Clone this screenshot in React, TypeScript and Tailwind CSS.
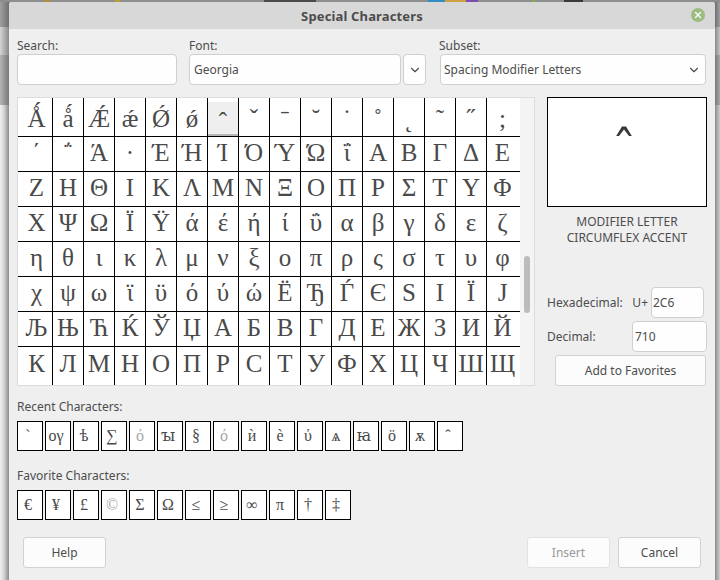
import React from "react";
import { ChevronDown, X } from "lucide-react";

const rows = [
  "ǺǻǼǽǾǿˆˇˉ˘˙˚˛˜˝;",
  "΄΅Ά·ΈΉΊΌΎΏΐΑΒΓΔΕ",
  "ΖΗΘΙΚΛΜΝΞΟΠΡΣΤΥΦ",
  "ΧΨΩΪΫάέήίΰαβγδεζ",
  "ηθικλμνξοπρςστυφ",
  "χψωϊϋόύώЁЂЃЄЅІЇЈ",
  "ЉЊЋЌЎЏАБВГДЕЖЗИЙ",
  "КЛМНОПРСТУФХЦЧШЩ",
];

const recent = ["`", "ογ", "ѣ", "∑", "ό", "ꙑ", "§", "ό", "ѝ", "è", "ὐ", "ѧ", "ꙗ", "ö", "ѫ", "ˆ"];
const favorites = ["€", "¥", "£", "©", "Σ", "Ω", "≤", "≥", "∞", "π", "†", "‡"];

const strip = [
  ["w-[44px]", "bg-[#8e8e8e]"],
  ["w-[6px]", "bg-[#b0923c]"],
  ["w-[65px]", "bg-[#8e8e8e]"],
  ["w-[5px]", "bg-[#b8a030]"],
  ["w-[144px]", "bg-[#8e8e8e]"],
  ["w-[52px]", "bg-[#4a4a4a]"],
  ["w-[112px]", "bg-[#8e8e8e]"],
  ["w-[17px]", "bg-[#2f8fc4]"],
  ["w-[21px]", "bg-[#d0a040]"],
  ["w-[12px]", "bg-[#7a4fb0]"],
  ["w-[54px]", "bg-[#8e8e8e]"],
  ["w-[3px]", "bg-[#7fae4e]"],
  ["w-[29px]", "bg-[#8e8e8e]"],
  ["w-[19px]", "bg-[#3a3a3a]"],
  ["w-[137px]", "bg-[#8e8e8e]"],
];

const input =
  "flex h-[31px] items-center rounded-[4px] border border-[#cfcfcf] bg-[#fdfefd] px-[4px]";
const button =
  "flex h-[31px] items-center justify-center rounded-[3px] border border-[#d2d2d2] bg-[#fbfcfb]";
const serif = "font-['Liberation_Serif','DejaVu_Serif',serif]";

const SmallCell = ({ char, faint }: { char: string; faint?: boolean }) => (
  <div
    className={`flex h-[30px] w-[26px] items-center justify-center border border-black bg-white pr-[4px] text-[16px] leading-none ${serif} ${
      faint ? "text-[#a5a5a5]" : "text-[#4a4a4a]"
    }`}
  >
    {char}
  </div>
);

export default function App() {
  return (
    <div className="flex h-[580px] w-[720px] flex-col overflow-hidden bg-[#8e8e8e] font-['Noto_Sans',sans-serif] text-[12px] leading-4 text-[#4d4d4d]">
      <div className="flex h-[2px] shrink-0">
        {strip.map(([w, c], i) => (
          <span key={i} className={`${w} ${c}`} />
        ))}
      </div>
      <div className="flex flex-1">
        <div className="flex w-[9px] flex-col">
          <div className="h-[25px] bg-[linear-gradient(90deg,#a0a0a0,#6f6f6f)]" />
          <div className="h-[28px] bg-[linear-gradient(90deg,#d5d5d5,#8a8a8a)]" />
          <div className="h-[50px] bg-[linear-gradient(90deg,#b5b5b5,#777777)]" />
          <div className="flex-1 bg-[linear-gradient(90deg,#f0f0f0_0%,#d8d8d8_40%,#8c8c8c_100%)]" />
        </div>

        <div className="flex w-[706px] flex-col rounded-t-[3px] bg-[#efefef]">
          <div className="relative flex h-[27px] items-center justify-center rounded-t-[3px] bg-[#d8d8d8]">
            <span className="text-[13px] font-bold tracking-[0.15px] text-[#4c4c4c]">Special Characters</span>
            <div className="absolute right-[10px] top-[6px] flex size-[14px] items-center justify-center rounded-full bg-[#9dbc7f]">
              <X className="size-[10px] text-white" strokeWidth={3} />
            </div>
          </div>

          <div className="flex flex-col pl-[8px] pt-[9px]">
            <div className="flex">
              <div className="w-[160px]">
                <div>Search:</div>
                <div className={input} />
              </div>
              <div className="ml-[12px]">
                <div>Font:</div>
                <div className="flex gap-[2px]">
                  <div className={`${input} w-[212px]`}>Georgia</div>
                  <div className={`${input} w-[23px] justify-center !px-0`}>
                    <ChevronDown className="size-[14px] text-[#4d4d4d]" />
                  </div>
                </div>
              </div>
              <div className="ml-[14px]">
                <div className="-ml-px">Subset:</div>
                <div className={`${input} w-[266px] justify-between !pl-[3px]`}>
                  Spacing Modifier Letters
                  <ChevronDown className="size-[14px] text-[#4d4d4d]" />
                </div>
              </div>
            </div>

            <div className="mt-[12px] flex">
              <div className="flex h-[289px] w-[518px] border border-[#dcdcdc] bg-[#f4f4f4]">
                <div
                  className={`grid w-[502px] grid-cols-[35px_repeat(14,31px)_33px] grid-rows-[39px_repeat(6,35px)_38px] bg-white text-[25px] leading-none text-[#4a4a4a] ${serif}`}
                >
                  {rows.map((row, r) =>
                    Array.from(row).map((ch, c) => {
                      const selected = r === 0 && c === 6;
                      return (
                        <div
                          key={`${r}-${c}`}
                          className={`flex border-black ${r < 7 ? "border-b" : ""} ${c < 15 ? "border-r" : ""} ${
                            selected ? "pt-[4px]" : ""
                          } ${c === 0 ? "pl-[3px]" : ""} ${c === 15 ? "pr-[2px]" : ""}`}
                        >
                          <div
                            className={`flex flex-1 items-center justify-center ${
                              selected
                                ? "border-b-2 border-[#b8b8b8] bg-[#efefef] pt-[6px]"
                                : r === 0
                                  ? "pt-[2px]"
                                  : r === 7
                                    ? "pb-[5px]"
                                    : "pb-[3px]"
                            }`}
                          >
                            {ch}
                          </div>
                        </div>
                      );
                    }),
                  )}
                </div>
                <div className="flex-1 pl-[4px] pt-[158px]">
                  <div className="h-[57px] w-[6px] rounded-full bg-[#bcbcbc]" />
                </div>
              </div>

              <div className="ml-[12px] flex w-[160px] flex-col">
                <div className="flex h-[110px] items-center justify-center border border-black bg-white pb-[4px] pr-[6px] font-['DejaVu_Serif',serif] text-[50px] leading-none text-[#3a3a3a]">
                  ˆ
                </div>
                <div className="mt-[7px] text-center">
                  MODIFIER LETTER
                  <br />
                  CIRCUMFLEX ACCENT
                </div>
                <div className="mt-[41px] flex items-center pr-[3px]">
                  <span>Hexadecimal:</span>
                  <span className="ml-auto mr-[3px]">U+</span>
                  <div className={`${input} w-[53px] !px-[1px]`}>2C6</div>
                </div>
                <div className="mt-[3px] flex items-center justify-between">
                  <span>Decimal:</span>
                  <div className={`${input} w-[75px] !px-[2px]`}>710</div>
                </div>
                <div className={`${button} ml-[8px] mr-px mt-[3px]`}>Add to Favorites</div>
              </div>
            </div>

            <div className="mt-[13px]">Recent Characters:</div>
            <div className="mt-[6px] flex gap-[2px]">
              {recent.map((ch, i) => (
                <SmallCell key={i} char={ch} faint={i === 4 || i === 7} />
              ))}
            </div>

            <div className="mt-[17px]">Favorite Characters:</div>
            <div className="mt-[6px] flex gap-[2px]">
              {favorites.map((ch, i) => (
                <SmallCell key={i} char={ch} faint={i === 3} />
              ))}
            </div>

            <div className="mt-[17px] flex pl-[6px] pr-[14px]">
              <div className={`${button} w-[83px]`}>Help</div>
              <div className={`${button} ml-auto w-[83px] border-[#e2e2e2] text-[#9a9a9a]`}>Insert</div>
              <div className={`${button} ml-[8px] w-[83px] border-[#c6c6c6]`}>Cancel</div>
            </div>
          </div>
        </div>

        <div className="flex flex-1 flex-col">
          <div className="h-[25px] bg-[linear-gradient(90deg,#6f6f6f,#a0a0a0)]" />
          <div className="h-[28px] bg-[linear-gradient(90deg,#8a8a8a,#c5c5c5)]" />
          <div className="h-[50px] bg-[linear-gradient(90deg,#777777,#a8a8a8)]" />
          <div className="flex-1 bg-[linear-gradient(90deg,#8c8c8c,#cdcdcd)]" />
        </div>
      </div>
    </div>
  );
}
